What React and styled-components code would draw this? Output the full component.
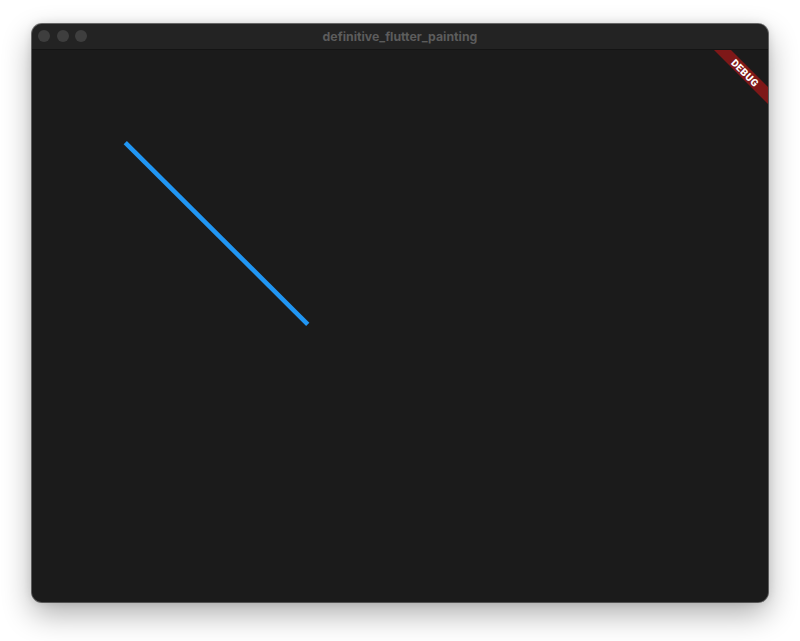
import React from "react";
import styled, { createGlobalStyle } from "styled-components";

const GlobalStyle = createGlobalStyle`
  html, body {
    margin: 0;
    padding: 0;
    background: #ffffff;
  }
  body {
    font-family: "Inter", "Liberation Sans", sans-serif;
  }
`;

export default function App() {
  return (
    <>
      <GlobalStyle />
      <Desktop>
        <Window>
          <TitleBar>
            <Lights>
              <Light />
              <Light />
              <Light />
            </Lights>
            <Title>definitive_flutter_painting</Title>
          </TitleBar>
          <Canvas>
            <Drawing viewBox="0 0 738 552" preserveAspectRatio="xMinYMin meet">
              <line x1="93.5" y1="93" x2="276.5" y2="275" stroke="#2196F3" strokeWidth="4.6" />
            </Drawing>
            <DebugBanner viewBox="0 0 60 60">
              <polygon points="6,0 23,0 60,37 60,54" fill="#7e1818" />
              <text
                x="37"
                y="23"
                transform="rotate(45 37 23)"
                textAnchor="middle"
                dominantBaseline="central"
                fill="#ffffff"
                fontFamily="Roboto, 'Liberation Sans', sans-serif"
                fontWeight="900"
                fontSize="10"
                letterSpacing="0.4"
              >
                DEBUG
              </text>
            </DebugBanner>
          </Canvas>
        </Window>
      </Desktop>
    </>
  );
}

const Desktop = styled.div`
  width: 800px;
  height: 641px;
  padding: 24px 32px 39px 32px;
  box-sizing: border-box;
  display: flex;
`;

const Window = styled.div`
  flex: 1;
  display: flex;
  flex-direction: column;
  border-radius: 10px;
  overflow: hidden;
  background: #1b1b1b;
  box-shadow: 0 0 0 1px rgba(0, 0, 0, 0.55), 0 0 0 0.5px rgba(255, 255, 255, 0.12) inset,
    0 12px 30px rgba(0, 0, 0, 0.32), 0 0 10px rgba(0, 0, 0, 0.12);
`;

const TitleBar = styled.div`
  position: relative;
  height: 25px;
  flex: none;
  display: flex;
  align-items: center;
  justify-content: center;
  background: #232323;
  border-bottom: 1px solid #141414;
`;

const Lights = styled.div`
  position: absolute;
  left: 6px;
  top: 6px;
  display: flex;
  gap: 6.5px;
`;

const Light = styled.span`
  width: 12px;
  height: 12px;
  border-radius: 50%;
  background: #3e3e3e;
`;

const Title = styled.span`
  font-family: "Inter", "Liberation Sans", sans-serif;
  font-weight: 700;
  font-size: 12.3px;
  color: #5c5c5c;
`;

const Canvas = styled.div`
  position: relative;
  flex: 1;
  background: #1b1b1b;
`;

const Drawing = styled.svg`
  display: block;
  width: 100%;
  height: 100%;
`;

const DebugBanner = styled.svg`
  position: absolute;
  top: 0;
  right: 0;
  width: 60px;
  height: 60px;
`;
